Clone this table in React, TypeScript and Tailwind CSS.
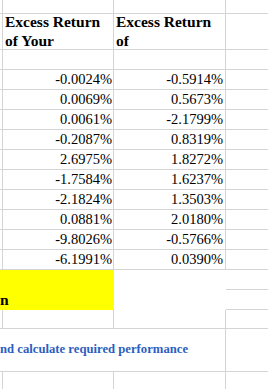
const colA = ['-0.0024%', '0.0069%', '0.0061%', '-0.2087%', '2.6975%', '-1.7584%', '-2.1824%', '0.0881%', '-9.8026%', '-6.1991%']
const colB = ['-0.5914%', '0.5673%', '-2.1799%', '0.8319%', '1.8272%', '1.6237%', '1.3503%', '2.0180%', '-0.5766%', '0.0390%']

export default function App() {
  return (
    <div
      className="w-[268px] h-[389px] overflow-hidden bg-white text-black"
      style={{ fontFamily: '"Liberation Serif", "Times New Roman", serif' }}
    >
      {/* top stub row */}
      <div className="flex h-[14px]">
        <div className="w-[3px] shrink-0 border-r border-b border-[#d4d4d4]" />
        <div className="w-[111px] shrink-0 border-r border-b border-[#d4d4d4]" />
        <div className="w-[112px] shrink-0 border-r border-b border-[#d4d4d4]" />
        <div className="flex-1 border-b border-[#d4d4d4]" />
      </div>

      {/* header */}
      <div className="flex h-[36px] text-[15.5px] font-bold leading-[18.5px]">
        <div className="w-[3px] shrink-0 border-r border-b border-[#d4d4d4]" />
        <div className="w-[111px] shrink-0 border-r border-b border-[#d4d4d4] pl-[2px] -mt-[1px] whitespace-nowrap">
          Excess Return
          <br />
          of Your
        </div>
        <div className="w-[112px] shrink-0 border-r border-b border-[#d4d4d4] pl-[2px] -mt-[1px] whitespace-nowrap">
          Excess Return
          <br />
          of
        </div>
        <div className="flex-1 border-b border-[#d4d4d4]" />
      </div>

      {/* empty row */}
      <div className="flex h-[20px]">
        <div className="w-[3px] shrink-0 border-r border-b border-[#d4d4d4]" />
        <div className="w-[111px] shrink-0 border-r border-b border-[#d4d4d4]" />
        <div className="w-[112px] shrink-0 border-r border-b border-[#d4d4d4]" />
        <div className="flex-1 border-b border-[#d4d4d4]" />
      </div>

      {/* data rows */}
      {colA.map((a, i) => (
        <div key={i} className="flex h-[20px] text-[14.5px] leading-[19px]">
          <div className="w-[3px] shrink-0 border-r border-b border-[#d4d4d4]" />
          <div className="w-[111px] shrink-0 border-r border-b border-[#d4d4d4] pr-[1px] text-right">{a}</div>
          <div className="w-[112px] shrink-0 border-r border-b border-[#d4d4d4] pr-[2px] text-right">{colB[i]}</div>
          <div className="flex-1 border-b border-[#d4d4d4]" />
        </div>
      ))}

      {/* highlighted row */}
      <div className="flex h-[40px]">
        <div className="w-[114px] shrink-0 bg-[#ffff00] flex items-end text-[15.5px] font-bold leading-[18px] pb-[1px]">
          n
        </div>
        <div className="w-[112px] shrink-0" />
        <div className="flex-1 flex flex-col">
          <div className="h-[20px] border-b border-[#d4d4d4]" />
          <div className="h-[20px] border-b border-[#d4d4d4]" />
        </div>
      </div>

      {/* empty row */}
      <div className="flex h-[19px]">
        <div className="w-[3px] shrink-0 border-r border-b border-[#d4d4d4]" />
        <div className="w-[111px] shrink-0 border-r border-b border-[#d4d4d4]" />
        <div className="w-[112px] shrink-0 border-r border-b border-[#d4d4d4]" />
        <div className="flex-1 border-b border-[#d4d4d4]" />
      </div>

      {/* note row */}
      <div className="flex h-[43px]">
        <div className="w-[226px] shrink-0 border-r border-b border-[#d4d4d4] flex items-center">
          <span className="text-[12.7px] font-bold text-[#2b5ec0] whitespace-nowrap leading-none -mt-[2px]">
            nd calculate required performance
          </span>
        </div>
        <div className="flex-1 border-b border-[#d4d4d4]" />
      </div>

      {/* last row */}
      <div className="flex h-[18px]">
        <div className="w-[3px] shrink-0 border-r border-[#d4d4d4]" />
        <div className="w-[111px] shrink-0 border-r border-[#d4d4d4]" />
        <div className="w-[112px] shrink-0 border-r border-[#d4d4d4]" />
        <div className="flex-1" />
      </div>
    </div>
  )
}
